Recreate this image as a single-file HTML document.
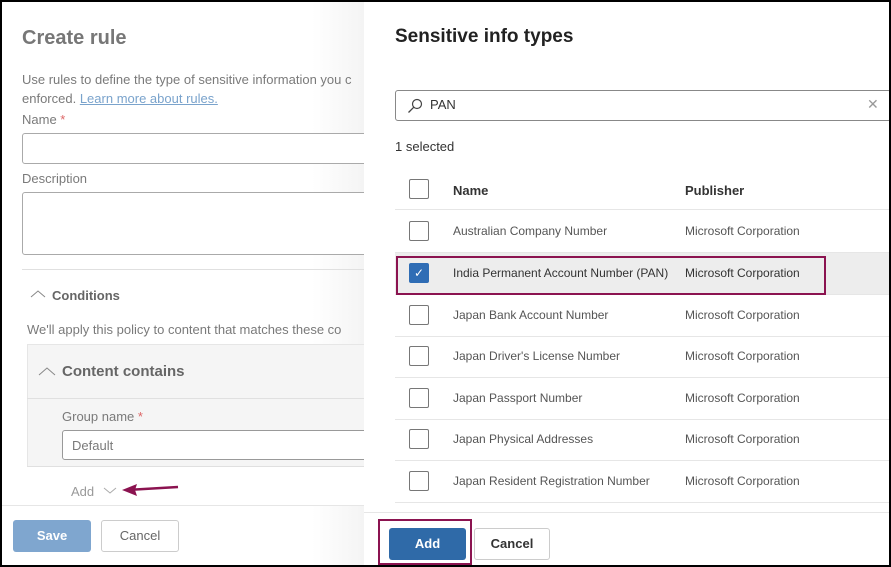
<!DOCTYPE html>
<html><head><style>
*{box-sizing:border-box;margin:0;padding:0}
body{width:891px;height:567px;overflow:hidden;background:#000;font-family:"Liberation Sans",sans-serif;position:relative}
.frame{position:absolute;left:2px;top:2px;width:887px;height:563px;background:#fff;overflow:hidden}
.a{position:absolute}
.left{position:absolute;left:0;top:0;width:362px;height:563px;background:linear-gradient(to right,#fff 0,#fff 310px,#f4f4f4 362px);color:#7a7a7a}
.right{position:absolute;left:362px;top:0;width:525px;height:563px;background:#fff;color:#333}
.cb{position:absolute;width:20px;height:20px;border:1px solid #777;border-radius:2px;background:#fff}
.row{position:absolute;left:31px;width:494px;height:42px;border-bottom:1px solid #e6e6e6;font-size:12px;color:#555}
.row .n{position:absolute;left:58px;top:13px}
.row .p{position:absolute;left:290px;top:13px}
.row .cb{left:14px;top:10px}
</style></head><body><div class="frame">
<div class="left">
<div class="a" style="left:20px;top:25px;font-size:20px;font-weight:bold;color:#777">Create rule</div>
<div class="a" style="left:20px;top:68px;font-size:13px;line-height:19px;white-space:nowrap">Use rules to define the type of sensitive information you c<br>enforced. <span style="color:#7aa3cc;text-decoration:underline">Learn more about rules.</span></div>
<div class="a" style="left:20px;top:110px;font-size:13px">Name <span style="color:#d66">*</span></div>
<div class="a" style="left:20px;top:131px;width:360px;height:31px;border:1px solid #aaa;border-radius:3px;background:#fff"></div>
<div class="a" style="left:20px;top:169px;font-size:13px">Description</div>
<div class="a" style="left:20px;top:190px;width:360px;height:63px;border:1px solid #aaa;border-radius:3px;background:#fff"></div>
<div class="a" style="left:20px;top:267px;width:342px;height:1px;background:#e0e0e0"></div>
<svg class="a" style="left:28px;top:287px" width="16" height="10"><path d="M1 8 L8 2 L15 8" fill="none" stroke="#888" stroke-width="1"/></svg>
<div class="a" style="left:50px;top:286px;font-size:13px;font-weight:bold;color:#666">Conditions</div>
<div class="a" style="left:25px;top:320px;font-size:13px;white-space:nowrap">We'll apply this policy to content that matches these co</div>
<div class="a" style="left:25px;top:342px;width:340px;height:162px;background:#f5f5f5;border:1px solid #e6e6e6"></div>
<div class="a" style="left:25px;top:396px;width:340px;height:1px;background:#e0e0e0"></div>
<div class="a" style="left:25px;top:464px;width:340px;height:40px;background:#fff;border-top:1px solid #e0e0e0"></div>
<svg class="a" style="left:36px;top:364px" width="18" height="11"><path d="M1 9 L9 2 L17 9" fill="none" stroke="#888" stroke-width="1"/></svg>
<div class="a" style="left:60px;top:361px;font-size:15px;font-weight:bold;color:#666">Content contains</div>
<div class="a" style="left:60px;top:407px;font-size:13px">Group name <span style="color:#d66">*</span></div>
<div class="a" style="left:60px;top:428px;width:310px;height:30px;border:1px solid #999;border-radius:3px;background:#fff;font-size:13px;padding:7px 9px">Default</div>
<div class="a" style="left:69px;top:482px;font-size:13px;color:#999">Add</div>
<svg class="a" style="left:101px;top:485px" width="14" height="8"><path d="M1 1 L7 6 L13 1" fill="none" stroke="#aaa" stroke-width="1"/></svg>
<svg class="a" style="left:118px;top:478px" width="62" height="20"><path d="M6 10 L58 7" stroke="#8b1350" stroke-width="2.5"/><path d="M2 10 L17 4 L15 10 L17 16 Z" fill="#8b1350"/></svg>
<div class="a" style="left:0;top:503px;width:362px;height:1px;background:#e6e6e6"></div>
<div class="a" style="left:11px;top:518px;width:78px;height:32px;background:#7fa6cf;border-radius:3px;color:#fff;font-weight:bold;font-size:13px;text-align:center;line-height:32px">Save</div>
<div class="a" style="left:99px;top:518px;width:78px;height:32px;border:1px solid #ccc;border-radius:3px;background:#fff;color:#666;font-size:13px;text-align:center;line-height:30px">Cancel</div>
</div>
<div class="right">
<div class="a" style="left:31px;top:24px;font-size:19px;font-weight:bold;color:#222">Sensitive info types</div>
<div class="a" style="left:31px;top:88px;width:496px;height:31px;border:1px solid #888;border-radius:3px"></div>
<svg class="a" style="left:43px;top:96px" width="16" height="16"><circle cx="10" cy="6" r="4.5" fill="none" stroke="#444" stroke-width="1.2"/><path d="M6.8 9.2 L1.5 14.5" stroke="#444" stroke-width="1.3"/></svg>
<div class="a" style="left:66px;top:95px;font-size:13px;color:#333">PAN</div>
<div class="a" style="left:503px;top:94px;font-size:14px;color:#999">✕</div>
<div class="a" style="left:31px;top:137px;font-size:13px;color:#333">1 selected</div>
<div class="row" style="top:166px;font-size:13px;color:#333;font-weight:bold"><div class="cb" style="top:11px"></div><div class="n" style="top:15px">Name</div><div class="p" style="top:15px">Publisher</div></div>
<div class="row" style="top:209px"><div class="cb"></div><div class="n">Australian Company Number</div><div class="p">Microsoft Corporation</div></div>
<div class="row" style="top:251px;background:#ededed"><div class="cb" style="background:#2f6db5;border-color:#2f6db5;color:#fff;font-size:12px;text-align:center;line-height:18px">✓</div><div class="n" style="color:#333">India Permanent Account Number (PAN)</div><div class="p" style="color:#333">Microsoft Corporation</div></div>
<div class="a" style="left:32px;top:254px;width:430px;height:39px;border:2px solid #8b1350"></div>
<div class="row" style="top:293px"><div class="cb"></div><div class="n">Japan Bank Account Number</div><div class="p">Microsoft Corporation</div></div>
<div class="row" style="top:334px"><div class="cb"></div><div class="n">Japan Driver's License Number</div><div class="p">Microsoft Corporation</div></div>
<div class="row" style="top:376px"><div class="cb"></div><div class="n">Japan Passport Number</div><div class="p">Microsoft Corporation</div></div>
<div class="row" style="top:417px"><div class="cb"></div><div class="n">Japan Physical Addresses</div><div class="p">Microsoft Corporation</div></div>
<div class="row" style="top:459px"><div class="cb"></div><div class="n">Japan Resident Registration Number</div><div class="p">Microsoft Corporation</div></div>
<div class="a" style="left:0;top:510px;width:525px;height:1px;background:#e6e6e6"></div>
<div class="a" style="left:14px;top:517px;width:94px;height:46px;border:2px solid #8b1350"></div>
<div class="a" style="left:25px;top:526px;width:77px;height:32px;background:#2f6aa8;border-radius:3px;color:#fff;font-weight:bold;font-size:13px;text-align:center;line-height:32px">Add</div>
<div class="a" style="left:110px;top:526px;width:76px;height:32px;border:1px solid #ccc;border-radius:3px;color:#333;font-weight:bold;font-size:13px;text-align:center;line-height:30px">Cancel</div>
</div>
</div></body></html>
